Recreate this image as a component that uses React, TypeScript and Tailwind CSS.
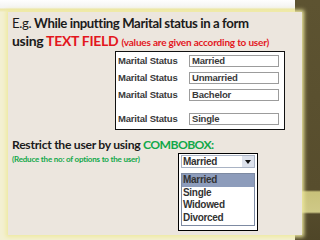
import React from "react";

const ui = { fontFamily: '"Liberation Sans", Arial, sans-serif' };
const slide = { fontFamily: 'Lato, "Open Sans", sans-serif' };

function FieldRow({ value, className = "" }: { value: string; className?: string }) {
  return (
    <div className={"flex items-center h-[12px] " + className}>
      <div className="w-[73px] pl-[2px] text-[9.5px] font-bold text-[#3a3a3a] leading-none tracking-[-0.2px]">
        Marital Status
      </div>
      <div className="w-[90px] h-[12px] border border-[#9c9c9c] bg-white flex items-center pl-[2px] text-[9.5px] font-bold text-[#3a3a3a] leading-none tracking-[-0.2px]">
        {value}
      </div>
    </div>
  );
}

function Combo() {
  const items = ["Married", "Single", "Widowed", "Divorced"];
  return (
    <div className="w-[80px] h-[78px] border-[1.5px] border-black bg-white px-[2px] pt-[1px]" style={ui}>
      <div className="h-[13px] border border-[#a9b3c4] flex items-center justify-between pl-[1px]">
        <span className="text-[10px] font-bold text-[#333] leading-none tracking-[-0.3px]">Married</span>
        <div className="w-[12px] h-[11px] bg-[#dde2ec] flex items-center justify-center">
          <svg width="6" height="4" viewBox="0 0 6 4">
            <path d="M0 0 L6 0 L3 4 Z" fill="#111" />
          </svg>
        </div>
      </div>
      <div className="mt-[5px] h-[53px] border border-[#7d8aa2]">
        {items.map((it, i) => (
          <div
            key={it}
            className={
              "h-[12.5px] flex items-center pl-[1px] text-[10px] font-bold text-[#333] leading-none tracking-[-0.3px] " +
              (i === 0 ? "bg-[#8d9cbb]" : "")
            }
          >
            {it}
          </div>
        ))}
      </div>
    </div>
  );
}

export default function App() {
  return (
    <div className="relative w-[320px] h-[240px] overflow-hidden bg-[linear-gradient(to_bottom,#fefefe_0px,#f3f3f1_8px,#ece6a6_9px,#efeab8_11px,#f3f0d2_12px)]">
      {/* slide background strip */}
      <div className="absolute top-0 right-0 w-[25px] h-[240px] bg-[linear-gradient(to_bottom,#5d5331_0px,#574d2d_190px,#c8c17a_192px,#cfc987_212px,#544a2b_214px,#4f4628_240px)]" />

      <div className="relative z-10 pt-[12px] pl-[8px]">
        <div className="w-[294px] h-[223px] bg-[#ece6de] shadow-[0_0_4px_2px_#eee9a0] pl-[4px] pt-[3px]" style={slide}>
          <div className="text-[13.2px] leading-[17px] tracking-[-0.4px] text-[#1b1b1b] whitespace-nowrap">
            E.g. <span className="font-bold">While inputting Marital status in a form</span>
          </div>
          <div className="text-[14px] leading-[17px] tracking-[-0.3px] text-[#1b1b1b] font-bold whitespace-nowrap">
            using <span className="text-[#e3161d]">TEXT FIELD</span>{" "}
            <span className="text-[10px] tracking-[-0.2px] text-[#e3161d]">(values are given according to user)</span>
          </div>

          <div
            className="ml-[103px] w-[170px] h-[79px] border-[1.5px] border-[#111] bg-white pt-[2.5px] flex flex-col"
            style={ui}
          >
            <FieldRow value="Married" />
            <FieldRow value="Unmarried" className="mt-[5px]" />
            <FieldRow value="Bachelor" className="mt-[5px]" />
            <FieldRow value="Single" className="mt-[12px]" />
          </div>

          <div className="mt-[6px] text-[12.2px] leading-[17px] tracking-[-0.3px] text-[#1b1b1b] font-bold whitespace-nowrap">
            Restrict the user by using{" "}
            <span className="text-[#12a84a] tracking-[-0.6px]">COMBOBOX:</span>
          </div>
          <div className="flex items-start">
            <div className="w-[166px] shrink-0 pt-[1px] text-[8px] leading-[10px] tracking-[-0.2px] font-bold text-[#12a84a] whitespace-nowrap">
              (Reduce the no: of options to the user)
            </div>
            <Combo />
          </div>
        </div>
      </div>
    </div>
  );
}
